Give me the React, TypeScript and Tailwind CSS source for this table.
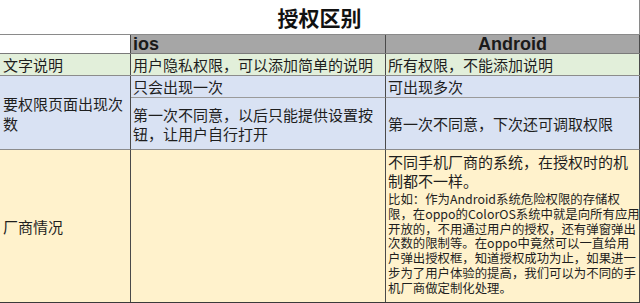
const cjk = "font-['Noto_Sans_CJK_SC','Noto_Sans_CJK_JP',sans-serif]";

const smallLines = [
  "比如：作为Android系统危险权限的存储权",
  "限，在oppo的ColorOS系统中就是向所有应用",
  "开放的，不用通过用户的授权，还有弹窗弹出",
  "次数的限制等。在oppo中竟然可以一直给用",
  "户弹出授权框，知道授权成功为止，如果进一",
  "步为了用户体验的提高，我们可以为不同的手",
  "机厂商做定制化处理。",
];

export default function App() {
  return (
    <div className={`w-[640px] h-[303px] overflow-hidden bg-white text-[#1e1e1e] ${cjk}`}>
      {/* title */}
      <div className="h-[35px] flex items-center justify-center border-b border-r border-[#8a8a8a] bg-white">
        <span className="text-[21px] font-bold leading-none text-[#111]">授权区别</span>
      </div>

      {/* header row */}
      <div className="grid grid-cols-[131px_255px_254px] h-[19px] bg-[#a6a6a6] border-b border-[#7a7a7a]">
        <div className="bg-white border-r border-[#4a4a4a]" />
        <div className="border-r border-[#4a4a4a] pl-[2px] pt-[1px]">
          <span className="font-['Liberation_Sans',sans-serif] font-bold text-[18px] leading-[17px] block text-[#1a1a1a]">ios</span>
        </div>
        <div className="border-r border-[#4a4a4a] pt-[1px] text-center">
          <span className="font-['Liberation_Sans',sans-serif] font-bold text-[18px] leading-[17px] block text-[#1a1a1a]">Android</span>
        </div>
      </div>

      {/* text description row */}
      <div className="grid grid-cols-[131px_255px_254px] h-[22px] bg-[#e2efda] border-b border-[#8c8c8c] text-[15px] leading-[20px]">
        <div className="border-r border-[#4a4a4a] pl-[3px] flex items-end">文字说明</div>
        <div className="border-r border-[#4a4a4a] pl-[2px] flex items-end whitespace-nowrap">用户隐私权限，可以添加简单的说明</div>
        <div className="border-r border-[#4a4a4a] pl-[2px] flex items-end">所有权限，不能添加说明</div>
      </div>

      {/* request count row */}
      <div className="grid grid-cols-[131px_255px_254px] grid-rows-[22px_52px] bg-[#d9e2f3] text-[15px]">
        <div className="row-span-2 border-r border-b border-[#4a4a4a] border-b-[#8c8c8c] pl-[3px] flex flex-col justify-center leading-[20px] pt-[3px]">
          <span className="whitespace-nowrap">要权限页面出现次</span>
          <span>数</span>
        </div>
        <div className="border-r border-b border-[#4a4a4a] border-b-[#9a9a9a] pl-[2px] flex items-end leading-[20px]">只会出现一次</div>
        <div className="border-r border-b border-[#4a4a4a] border-b-[#9a9a9a] pl-[2px] flex items-end leading-[20px]">可出现多次</div>
        <div className="border-r border-b border-[#4a4a4a] border-b-[#8c8c8c] pl-[2px] flex flex-col justify-center leading-[19px]">
          <span className="whitespace-nowrap">第一次不同意，以后只能提供设置按</span>
          <span>钮，让用户自行打开</span>
        </div>
        <div className="border-r border-b border-[#4a4a4a] border-b-[#8c8c8c] pl-[2px] flex items-center leading-[19px]">第一次不同意，下次还可调取权限</div>
      </div>

      {/* vendor row */}
      <div className="grid grid-cols-[131px_255px_254px] h-[153px] bg-[#fff2cc] border-b border-[#3a3a3a]">
        <div className="border-r border-[#4a4a4a] pl-[3px] flex items-center text-[15px] leading-[20px] pt-[2px]">厂商情况</div>
        <div className="border-r border-[#4a4a4a]" />
        <div className="border-r border-[#4a4a4a] pl-[2px] pt-[2px] overflow-hidden">
          <div className="text-[15px] leading-[19px]">
            <div className="whitespace-nowrap">不同手机厂商的系统，在授权时的机</div>
            <div>制都不一样。</div>
          </div>
          <div className="text-[12.4px] leading-[14.8px] mt-[2px]">
            {smallLines.map((l) => (
              <div key={l} className="whitespace-nowrap">{l}</div>
            ))}
          </div>
        </div>
      </div>
    </div>
  );
}
